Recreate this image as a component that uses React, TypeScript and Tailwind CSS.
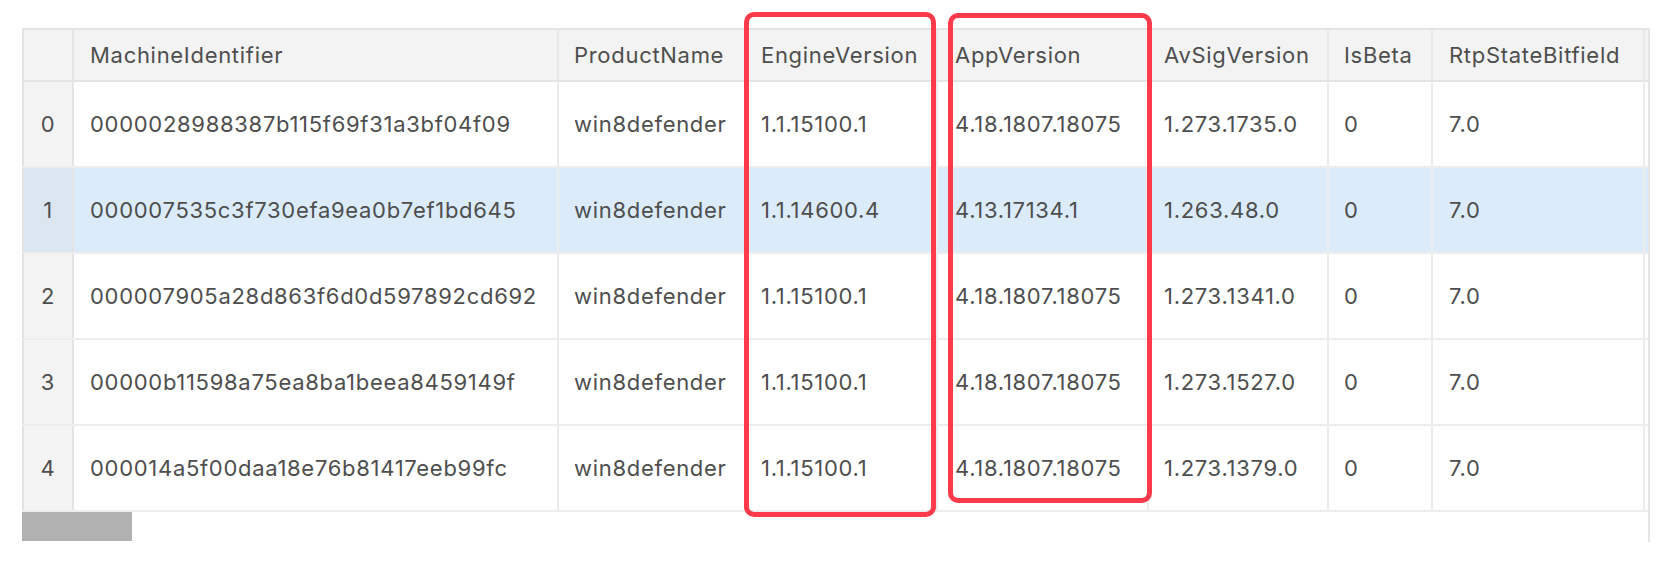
import React from "react";

const cols = [
  { name: "MachineIdentifier", w: "w-[485px]", p: "pl-[16px]" },
  { name: "ProductName", w: "w-[189px]", p: "pl-[15px]" },
  { name: "EngineVersion", w: "w-[190px]", p: "pl-[13px]" },
  { name: "AppVersion", w: "w-[211px]", p: "pl-[17px]" },
  { name: "AvSigVersion", w: "w-[180px]", p: "pl-[15px]" },
  { name: "IsBeta", w: "w-[104px]", p: "pl-[15px]" },
  { name: "RtpStateBitfield", w: "w-[212px]", p: "pl-[16px]" },
];

const rows: string[][] = [
  ["0000028988387b115f69f31a3bf04f09", "win8defender", "1.1.15100.1", "4.18.1807.18075", "1.273.1735.0", "0", "7.0"],
  ["000007535c3f730efa9ea0b7ef1bd645", "win8defender", "1.1.14600.4", "4.13.17134.1", "1.263.48.0", "0", "7.0"],
  ["000007905a28d863f6d0d597892cd692", "win8defender", "1.1.15100.1", "4.18.1807.18075", "1.273.1341.0", "0", "7.0"],
  ["00000b11598a75ea8ba1beea8459149f", "win8defender", "1.1.15100.1", "4.18.1807.18075", "1.273.1527.0", "0", "7.0"],
  ["000014a5f00daa18e76b81417eeb99fc", "win8defender", "1.1.15100.1", "4.18.1807.18075", "1.273.1379.0", "0", "7.0"],
];

export default function App() {
  return (
    <div
      className="relative w-[1678px] h-[576px] bg-white text-[#4e4e4e] text-[22px] tracking-[0.7px]"
      style={{ fontFamily: "Inter, 'Noto Sans', sans-serif" }}
    >
      <div className="pt-[28px] pl-[22px]">
        <div className="w-[1628px] border-r-2 border-[#e6e6e6]">
          <div className="w-[1626px] overflow-hidden">
            <div className="w-max">
              {/* header */}
              <div className="flex h-[54px] bg-[#f3f3f3] border-t-2 border-b-2 border-[#e4e4e4]">
                <div className="w-[52px] shrink-0 border-l-2 border-r-2 border-[#e4e4e4]" />
                {cols.map((c) => (
                  <div
                    key={c.name}
                    className={`${c.w} ${c.p} shrink-0 border-r-2 border-[#e8e8e8] flex items-center whitespace-nowrap`}
                  >
                    {c.name}
                  </div>
                ))}
                <div className="w-[220px] shrink-0" />
              </div>
              {rows.map((r, i) => {
                const hl = i === 1;
                return (
                  <div
                    key={i}
                    className={`flex h-[86px] border-b-2 border-[#ededed] ${hl ? "bg-[#dbebfa]" : "bg-white"}`}
                  >
                    <div
                      className={`w-[52px] shrink-0 border-l-2 border-r-2 border-[#e4e4e4] flex items-center justify-center ${hl ? "bg-[#dbe6f1]" : "bg-[#f3f3f3]"}`}
                    >
                      {i}
                    </div>
                    {r.map((v, j) => (
                      <div
                        key={j}
                        className={`${cols[j].w} ${cols[j].p} shrink-0 border-r-2 border-[#ececec] flex items-center whitespace-nowrap`}
                      >
                        {v}
                      </div>
                    ))}
                    <div className="w-[220px] shrink-0" />
                  </div>
                );
              })}
            </div>
          </div>
          {/* scrollbar */}
          <div className="h-[30px] w-[1626px]">
            <div className="h-[29px] w-[110px] bg-[#b1b1b1]" />
          </div>
        </div>
      </div>
      {/* annotation boxes */}
      <div className="absolute left-[744px] top-[12px] w-[192px] h-[505px] border-[5px] border-[#fd3a4a] rounded-[10px]" />
      <div className="absolute left-[948px] top-[13px] w-[204px] h-[490px] border-[5px] border-[#fd3a4a] rounded-[10px]" />
    </div>
  );
}
